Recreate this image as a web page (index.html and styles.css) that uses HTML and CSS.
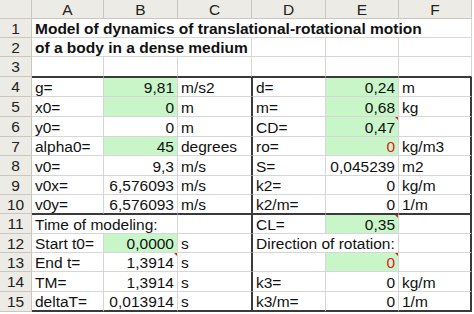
FILE: index.html
```html
<!DOCTYPE html>
<html>
<head>
<meta charset="utf-8">
<link rel="stylesheet" href="styles.css">
</head>
<body>
<div class="sheet">
  <div class="hd corner"></div>
  <div class="hd">A</div><div class="hd">B</div><div class="hd">C</div><div class="hd">D</div><div class="hd">E</div><div class="hd">F</div>

  <div class="rh">1</div>
  <div class="c bold span6">Model of dynamics of translational-rotational motion</div>

  <div class="rh">2</div>
  <div class="c bold span3">of a body in a dense medium</div><div class="c"></div><div class="c"></div><div class="c"></div>

  <div class="rh">3</div>
  <div class="c ab"></div><div class="c ab"></div><div class="c ab"></div><div class="c ab"></div><div class="c ab"></div><div class="c ab"></div>

  <div class="rh">4</div>
  <div class="c at">g=</div><div class="c at n g">9,81</div><div class="c at dr">m/s2</div><div class="c at dl">d=</div><div class="c at n g">0,24</div><div class="c at er">m</div>

  <div class="rh">5</div>
  <div class="c">x0=</div><div class="c n g">0</div><div class="c dr">m</div><div class="c dl">m=</div><div class="c n g">0,68</div><div class="c er">kg</div>

  <div class="rh">6</div>
  <div class="c">y0=</div><div class="c n">0</div><div class="c dr">m</div><div class="c dl">CD=</div><div class="c n g mark">0,47</div><div class="c er"></div>

  <div class="rh">7</div>
  <div class="c">alpha0=</div><div class="c n g">45</div><div class="c dr">degrees</div><div class="c dl">ro=</div><div class="c n g red">0</div><div class="c er">kg/m3</div>

  <div class="rh">8</div>
  <div class="c">v0=</div><div class="c n">9,3</div><div class="c dr">m/s</div><div class="c dl">S=</div><div class="c n">0,045239</div><div class="c er">m2</div>

  <div class="rh">9</div>
  <div class="c">v0x=</div><div class="c n">6,576093</div><div class="c dr">m/s</div><div class="c dl">k2=</div><div class="c n">0</div><div class="c er">kg/m</div>

  <div class="rh">10</div>
  <div class="c ab">v0y=</div><div class="c ab n">6,576093</div><div class="c ab dr">m/s</div><div class="c ab dl">k2/m=</div><div class="c ab n">0</div><div class="c ab er">1/m</div>

  <div class="rh">11</div>
  <div class="c at span2">Time of modeling:</div><div class="c at dr"></div><div class="c at dl">CL=</div><div class="c at n g mark">0,35</div><div class="c at er"></div>

  <div class="rh">12</div>
  <div class="c">Start t0=</div><div class="c n g">0,0000</div><div class="c dr">s</div><div class="c dl span2">Direction of rotation:</div><div class="c er"></div>

  <div class="rh">13</div>
  <div class="c">End t=</div><div class="c n mark">1,3914</div><div class="c dr">s</div><div class="c dl"></div><div class="c n g red mark">0</div><div class="c er"></div>

  <div class="rh">14</div>
  <div class="c">TM=</div><div class="c n">1,3914</div><div class="c dr">s</div><div class="c dl">k3=</div><div class="c n">0</div><div class="c er">kg/m</div>

  <div class="rh">15</div>
  <div class="c bot">deltaT=</div><div class="c bot n">0,013914</div><div class="c bot dr">s</div><div class="c bot dl">k3/m=</div><div class="c bot n">0</div><div class="c bot er">1/m</div>
</div>
</body>
</html>
```
FILE: styles.css
```css
html, body {
  margin: 0;
  padding: 0;
  background: #ffffff;
}
.sheet {
  display: grid;
  grid-template-columns: 32px 72px 74px 74px 74px 73px 73px;
  grid-template-rows: 19px 19px 19px 20px 20px 20px 20px 19px 20px 19px 19px 20px 19px 19px 20px 20px;
  font-family: "Liberation Sans", Arial, sans-serif;
  font-size: 15.5px;
  color: #111;
  width: 474px;
}
.hd, .rh {
  box-sizing: border-box;
  background: #ecebe5;
  border-right: 1px solid #c9c7bf;
  border-bottom: 1px solid #c9c7bf;
  display: flex;
  align-items: center;
  justify-content: center;
  color: #222;
  line-height: 1;
  padding-top: 1px;
}
.corner { background: #ecebe5; }
.c {
  box-sizing: border-box;
  position: relative;
  border-right: 1px solid #d6d6d6;
  border-bottom: 1px solid #d6d6d6;
  padding: 0 2px 0 3px;
  white-space: nowrap;
  display: flex;
  align-items: center;
  line-height: 1;
  padding-top: 2px;
  min-width: 0;
}
.n { justify-content: flex-end; padding-right: 3px; }
.g { background: #c9f6c9; }
.red { color: #e02020; }
.bold { font-weight: bold; }
.span6 { grid-column: span 6; }
.span3 { grid-column: span 3; }
.span2 { grid-column: span 2; }
.ab { border-bottom: 1px solid #3a3a3a; }
.at { border-top: 1px solid #3a3a3a; }
.dr { border-right: 1px solid #3a3a3a; }
.dl { border-left: 1px solid #3a3a3a; }
.er { border-right: 2px solid #3a3a3a; }
.bot { border-bottom: 2px solid #3a3a3a; }
.mark::after {
  content: "";
  position: absolute;
  top: 0;
  right: 0;
  width: 0;
  height: 0;
  border-top: 3px solid #d02a10;
  border-left: 3px solid transparent;
}
```
